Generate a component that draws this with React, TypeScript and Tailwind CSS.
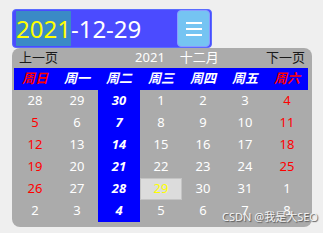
import React from 'react';

const weekNames = ['周日', '周一', '周二', '周三', '周四', '周五', '周六'];

const rows = [
  [28, 29, 30, 1, 2, 3, 4],
  [5, 6, 7, 8, 9, 10, 11],
  [12, 13, 14, 15, 16, 17, 18],
  [19, 20, 21, 22, 23, 24, 25],
  [26, 27, 28, 29, 30, 31, 1],
  [2, 3, 4, 5, 6, 7, 8],
];

const font = { fontFamily: '"Noto Sans", "Noto Sans CJK SC", sans-serif' };

const DayCell: React.FC<{ day: number; col: number; row: number }> = ({ day, col, row }) => {
  const isTue = col === 2;
  const isSelected = row === 4 && col === 3;
  // only days of the current month get the red weekend colour
  const inMonth = !((row === 0 && day > 20) || (row >= 4 && day < 10));
  const weekend = (col === 0 || col === 6) && inMonth;

  if (isTue) {
    return (
      <div className="flex items-center justify-center bg-[#0000ff] text-white font-bold italic text-[13px]">
        {day}
      </div>
    );
  }
  if (isSelected) {
    return (
      <div className="flex items-center justify-center bg-[#dcdcdc] border border-[#c4c4c4] text-[#ffff00] text-[13px]">
        {day}
      </div>
    );
  }
  return (
    <div
      className={`flex items-center justify-center text-[13px] ${
        weekend ? 'text-[#ff0000]' : 'text-white'
      }`}
    >
      {day}
    </div>
  );
};

export default function App() {
  return (
    <div className="w-[323px] h-[233px] bg-[#efefef] relative overflow-hidden" style={font}>
      {/* Input */}
      <div className="ml-[12px] pt-[9px]">
        <div className="w-[200px] h-[39px] bg-[#4b4bff] rounded-[4px] border border-[#5a6cff] flex items-center pl-[3px] pr-[1px]">
          <div className="flex-1 flex items-center h-[35px] text-[24px] leading-none text-white">
            <span className="bg-[#3a8ac6] text-[#ffff00] h-[35px] flex items-center">2021</span>
            <span>-12-29</span>
          </div>
          <button className="w-[33px] h-[37px] bg-[#75c4f2] rounded-[4px] border border-[#8a9cff] flex flex-col items-center justify-center gap-[4px]">
            <span className="block w-[16px] h-[2px] bg-white" />
            <span className="block w-[16px] h-[2px] bg-white" />
            <span className="block w-[16px] h-[2px] bg-white" />
          </button>
        </div>
      </div>

      {/* Calendar panel */}
      <div className="ml-[12px] w-[300px] h-[179px] bg-[#ababab] rounded-[8px] px-[2px] pb-[3px]">
        <div className="h-[20px] flex items-center justify-between text-[13px] px-[5px]">
          <span className="text-[#1a1a1a]">上一页</span>
          <span className="text-white pl-[30px]">
            2021<span className="ml-[15px]">十二月</span>
          </span>
          <span className="text-[#1a1a1a]">下一页</span>
        </div>
        <div className="grid grid-cols-7 h-[22px] bg-[#0000ff] mr-[2px]">
          {weekNames.map((w, i) => (
            <div
              key={w}
              className={`flex items-center justify-center font-bold italic text-[13px] ${
                i === 0 || i === 6 ? 'text-[#ff0000]' : 'text-white'
              }`}
            >
              {w}
            </div>
          ))}
        </div>
        <div className="grid grid-cols-7 auto-rows-[22px] mr-[2px]">
          {rows.map((r, ri) =>
            r.map((d, ci) => <DayCell key={`${ri}-${ci}`} day={d} col={ci} row={ri} />)
          )}
        </div>
      </div>

      {/* Watermark */}
      <div className="absolute left-[222px] top-[209px] text-[11px] text-[#f4f4f4] [text-shadow:1px_1px_1px_#555]">
        CSDN @我是大SEO
      </div>
    </div>
  );
}
